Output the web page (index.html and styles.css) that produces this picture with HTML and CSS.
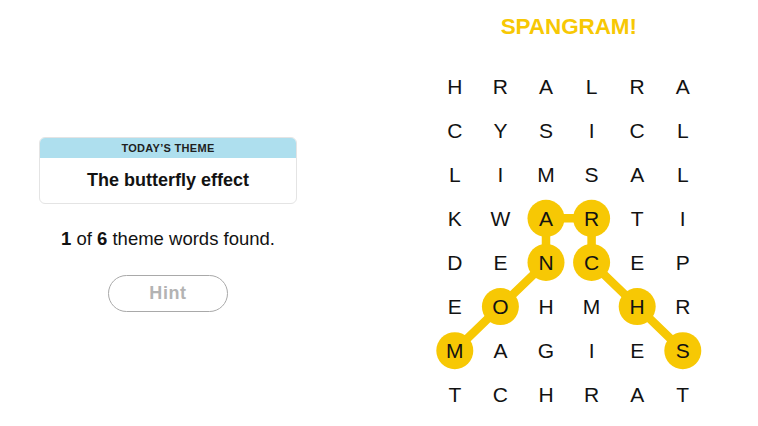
FILE: index.html
```html
<!DOCTYPE html>
<html lang="en">
<head>
<meta charset="utf-8">
<title>Strands</title>
<link rel="stylesheet" href="styles.css">
</head>
<body>
<main class="page">
  <section class="side">
    <div class="theme-card">
      <div class="theme-head">TODAY’S THEME</div>
      <div class="theme-body">The butterfly effect</div>
    </div>
    <p class="progress"><b>1</b> of <b>6</b> theme words found.</p>
    <button class="hint" type="button">Hint</button>
  </section>
  <section class="board">
    <h1 class="status">SPANGRAM!</h1>
    <div class="grid-wrap">
      <svg class="path" width="273.6" height="352.8" viewBox="0 0 273.6 352.8" aria-hidden="true">
        <polyline points="22.8,286.65 68.4,242.55 114,198.45 114,154.35 159.6,154.35 159.6,198.45 205.2,242.55 250.8,286.65" fill="none" stroke="#F7C804" stroke-width="8.5" stroke-linejoin="round" stroke-linecap="round"/>
        <g fill="#F7C804">
          <circle cx="22.8" cy="286.65" r="18.5"/>
          <circle cx="68.4" cy="242.55" r="18.5"/>
          <circle cx="114" cy="198.45" r="18.5"/>
          <circle cx="114" cy="154.35" r="18.5"/>
          <circle cx="159.6" cy="154.35" r="18.5"/>
          <circle cx="159.6" cy="198.45" r="18.5"/>
          <circle cx="205.2" cy="242.55" r="18.5"/>
          <circle cx="250.8" cy="286.65" r="18.5"/>
        </g>
      </svg>
      <div class="grid">
        <span>H</span><span>R</span><span>A</span><span>L</span><span>R</span><span>A</span>
        <span>C</span><span>Y</span><span>S</span><span>I</span><span>C</span><span>L</span>
        <span>L</span><span>I</span><span>M</span><span>S</span><span>A</span><span>L</span>
        <span>K</span><span>W</span><span>A</span><span>R</span><span>T</span><span>I</span>
        <span>D</span><span>E</span><span>N</span><span>C</span><span>E</span><span>P</span>
        <span>E</span><span>O</span><span>H</span><span>M</span><span>H</span><span>R</span>
        <span>M</span><span>A</span><span>G</span><span>I</span><span>E</span><span>S</span>
        <span>T</span><span>C</span><span>H</span><span>R</span><span>A</span><span>T</span>
      </div>
    </div>
  </section>
</main>
</body>
</html>
```

FILE: styles.css
```css
html, body {
  margin: 0;
  padding: 0;
  background: #ffffff;
}

body {
  width: 758px;
  height: 426px;
  overflow: hidden;
  font-family: "Liberation Sans", Arial, sans-serif;
  color: #121212;
}

.page {
  display: flex;
  align-items: flex-start;
}

.side {
  width: 258px;
  margin-left: 39px;
  padding-top: 137px;
  display: flex;
  flex-direction: column;
  align-items: center;
}

.theme-card {
  width: 100%;
  box-sizing: border-box;
  border: 1px solid #e4e4e4;
  border-radius: 6px;
  overflow: hidden;
}

.theme-head {
  height: 20px;
  line-height: 20px;
  background: #aedfee;
  text-align: center;
  font-size: 11px;
  font-weight: 700;
  letter-spacing: 0.3px;
  color: #1f1f1f;
}

.theme-body {
  height: 45px;
  line-height: 45px;
  text-align: center;
  font-size: 18px;
  font-weight: 700;
}

.progress {
  margin: 23px 0 0;
  line-height: 24px;
  font-size: 18.5px;
  text-align: center;
}

.hint {
  margin-top: 24px;
  width: 120px;
  height: 37px;
  border: 1.5px solid #a9a9a9;
  border-radius: 19px;
  background: #ffffff;
  font-family: "Liberation Sans", Arial, sans-serif;
  font-size: 18px;
  font-weight: 700;
  letter-spacing: 0.6px;
  color: #b3b3b3;
  padding: 0;
}

.board {
  margin-left: 135px;
  width: 273.6px;
  display: flex;
  flex-direction: column;
  align-items: center;
}

.status {
  margin: 14px 0 0;
  height: 26px;
  line-height: 26px;
  font-size: 22.5px;
  font-weight: 700;
  color: #f7c804;
  letter-spacing: -0.1px;
}

.grid-wrap {
  position: relative;
  margin-top: 24px;
  width: 273.6px;
  height: 352.8px;
}

.path {
  position: absolute;
  left: 0;
  top: 0;
}

.grid {
  position: relative;
  display: grid;
  grid-template-columns: repeat(6, 45.6px);
  grid-auto-rows: 44.1px;
}

.grid span {
  display: flex;
  align-items: center;
  justify-content: center;
  font-size: 21px;
  line-height: 1;
  color: #121212;
}
```
